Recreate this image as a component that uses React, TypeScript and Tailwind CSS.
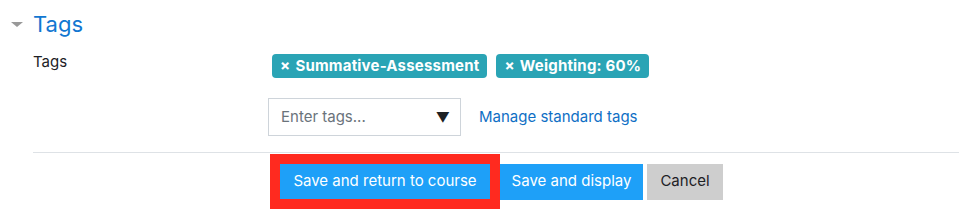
const font = "font-['Inter','Liberation_Sans',Arial,sans-serif]";

function TagBadge({ label }: { label: string }) {
  return (
    <span className="inline-flex h-[24px] items-center rounded-[4px] bg-[#2aa4b5] px-[8px] text-[15px] font-bold tracking-[0.2px] text-white">
      <span className="mr-[5px]">×</span>
      {label}
    </span>
  );
}

export default function App() {
  return (
    <div className={`h-[209px] w-[959px] overflow-hidden bg-white ${font}`}>
      <div className="flex items-center pt-[11px]">
        <span className="ml-[11px] mr-[10px] h-0 w-0 border-x-[6px] border-t-[5px] border-x-transparent border-t-[#999999]" />
        <h2 className="text-[22px] leading-[26px] text-[#1177d1]">Tags</h2>
      </div>

      <div className="mt-[15px] flex items-start">
        <div className="w-[268px] shrink-0 pl-[33px] text-[15px] leading-[20px] text-[#1d2125]">Tags</div>
        <div className="flex flex-col">
          <div className="ml-[4px] mt-[2px] flex gap-[9px]">
            <TagBadge label="Summative-Assessment" />
            <TagBadge label="Weighting: 60%" />
          </div>
          <div className="mt-[20px] flex items-center">
            <div className="flex h-[38px] w-[193px] items-center justify-between border border-[#ced4da] pl-[12px] pr-[10px] text-[15px] text-[#6a737b]">
              <span>Enter tags...</span>
              <span className="text-[14px] text-[#1d2125]">▼</span>
            </div>
            <a className="ml-[18px] text-[15px] text-[#0f6fc5]">Manage standard tags</a>
          </div>
        </div>
      </div>

      <hr className="ml-[33px] mt-[16px] border-t border-[#dee2e6]" />

      <div className="ml-[270px] mt-[1px] flex items-center">
        <div className="border-[10px] border-[#ff2a1f]">
          <button className="h-[35px] w-[210px] bg-[#1ea0f8] text-[15px] text-white">
            Save and return to course
          </button>
        </div>
        <button className="h-[36px] w-[143px] bg-[#1ea0f8] text-[15px] text-white">Save and display</button>
        <button className="ml-[4px] h-[36px] w-[76px] bg-[#cecece] text-[15px] text-[#1d2125]">Cancel</button>
      </div>
    </div>
  );
}
